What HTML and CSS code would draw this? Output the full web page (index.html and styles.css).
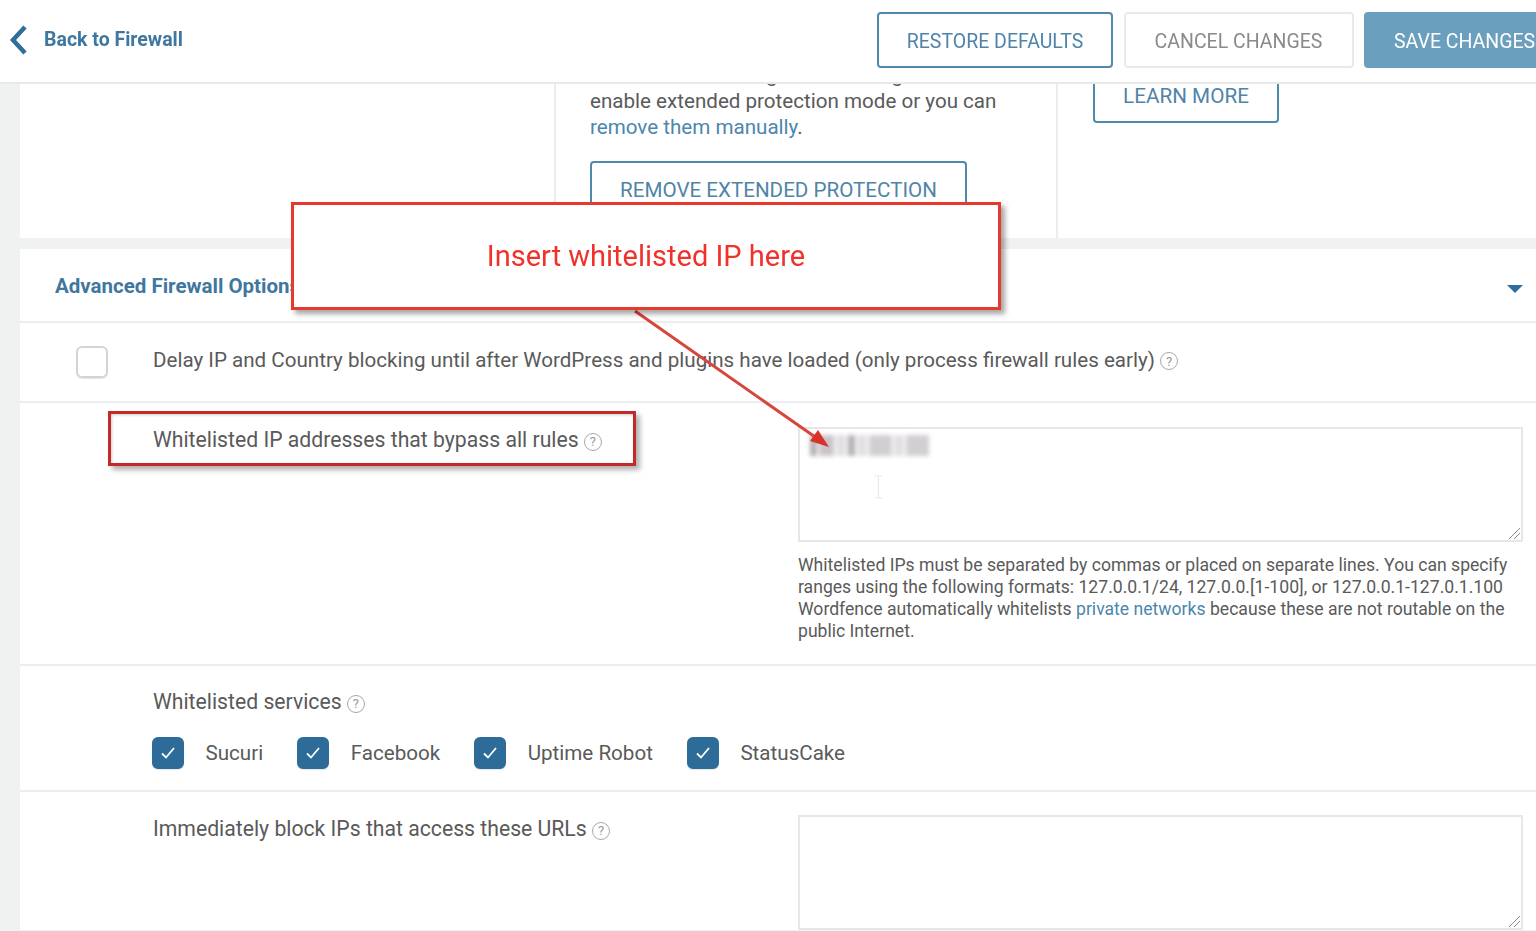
FILE: index.html
```html
<!DOCTYPE html>
<html lang="en">

<head>
    <meta charset="UTF-8">
    <meta name="viewport" content="width=device-width, initial-scale=1.0">
    <title>Firewall Options</title>
    <link rel="stylesheet" href="styles.css">
</head>

<body>
    <header class="topbar">
        <a class="back" href="#">
            <svg class="back-icon" width="20" height="32" viewBox="0 0 20 32"><path d="M16 3 L4 16 L16 29" fill="none" stroke="#2f6d9a" stroke-width="4.5"/></svg>
            Back to Firewall
        </a>
        <div class="actions">
            <button class="btn btn-outline btn-restore">Restore Defaults</button>
            <button class="btn btn-muted">Cancel Changes</button>
            <button class="btn btn-save">Save Changes</button>
        </div>
    </header>

    <main class="page">
        <section class="card card-top">
            <div class="col-empty"></div>
            <div class="col-mid">
                <p>to remove the configuration changes that<br>enable extended protection mode or you can<br><a href="#">remove them manually</a>.</p>
                <button class="btn btn-outline btn-remove">Remove Extended Protection</button>
            </div>
            <div class="col-right">
                <button class="btn btn-outline btn-learn">Learn More</button>
            </div>
        </section>

        <section class="card">
            <div class="card-head">
                <h2>Advanced Firewall Options</h2>
                <span class="caret"></span>
            </div>

            <div class="row row-delay">
                <span class="check"></span>
                <span>Delay IP and Country blocking until after WordPress and plugins have loaded (only process firewall rules early) <i class="help">?</i></span>
            </div>

            <div class="row row-field row-ips">
                <label>Whitelisted IP addresses that bypass all rules <i class="help">?</i></label>
                <div>
                    <div class="area-wrap">
                        <textarea class="area"></textarea>
                        <div class="blurred">
                            <span class="b4"></span><span class="b1"></span><span class="b2"></span><span class="b4"></span><span class="b2"></span><span class="b3"></span><span class="b2"></span><span class="b3"></span>
                        </div>
                        <svg class="ibeam" width="9" height="24" viewBox="0 0 9 24"><path d="M1 1 H8 M4.5 1 V23 M1 23 H8" fill="none" stroke="#e8e8e8" stroke-width="1"/></svg>
                        <svg class="grip" width="13" height="13" viewBox="0 0 13 13"><path d="M1 12 L12 1 M6 12 L12 6" fill="none" stroke="#8a8a8a" stroke-width="1"/></svg>
                    </div>
                    <p class="note">Whitelisted IPs must be separated by commas or placed on separate lines. You can specify ranges using the following formats: 127.0.0.1/24, 127.0.0.[1-100], or 127.0.0.1-127.0.1.100 Wordfence automatically whitelists <a href="#">private networks</a> because these are not routable on the public Internet.</p>
                </div>
            </div>

            <div class="row row-services">
                <label>Whitelisted services <i class="help">?</i></label>
                <div class="services">
                    <span class="service"><span class="check on"><svg width="18" height="16" viewBox="0 0 18 16"><path d="M3 8.5 L7 12.5 L15 3" fill="none" stroke="#fff" stroke-width="1.8"/></svg></span>Sucuri</span>
                    <span class="service"><span class="check on"><svg width="18" height="16" viewBox="0 0 18 16"><path d="M3 8.5 L7 12.5 L15 3" fill="none" stroke="#fff" stroke-width="1.8"/></svg></span>Facebook</span>
                    <span class="service"><span class="check on"><svg width="18" height="16" viewBox="0 0 18 16"><path d="M3 8.5 L7 12.5 L15 3" fill="none" stroke="#fff" stroke-width="1.8"/></svg></span>Uptime Robot</span>
                    <span class="service"><span class="check on"><svg width="18" height="16" viewBox="0 0 18 16"><path d="M3 8.5 L7 12.5 L15 3" fill="none" stroke="#fff" stroke-width="1.8"/></svg></span>StatusCake</span>
                </div>
            </div>

            <div class="row row-field row-urls">
                <label>Immediately block IPs that access these URLs <i class="help">?</i></label>
                <div class="area-wrap">
                    <textarea class="area"></textarea>
                    <svg class="grip" width="13" height="13" viewBox="0 0 13 13"><path d="M1 12 L12 1 M6 12 L12 6" fill="none" stroke="#8a8a8a" stroke-width="1"/></svg>
                </div>
            </div>
        </section>
    </main>

    <!-- annotations drawn over the page -->
    <div class="callout">Insert whitelisted IP here</div>
    <div class="mark"></div>
    <svg class="arrow" width="220" height="160" viewBox="0 0 220 160">
        <line x1="3" y1="2" x2="186" y2="130" stroke="#d8453c" stroke-width="3"/>
        <polygon points="197,138 178,132 186,121" fill="#d8332b"/>
    </svg>
</body>

</html>
```

FILE: styles.css
```css
* {
    margin: 0;
    padding: 0;
    box-sizing: border-box;
}

html, body {
    height: 931px;
    overflow: hidden;
}

body {
    background-color: #f0f1f1;
    font-family: Roboto, "Liberation Sans", sans-serif;
    font-size: 20.6px;
    color: #5a5a5a;
    position: relative;
    filter: blur(0.5px);
}

a {
    color: #4b86ad;
    text-decoration: none;
}

.topbar {
    height: 84px;
    background-color: #fff;
    border-bottom: 2px solid #e8e9e9;
    display: flex;
    justify-content: space-between;
    align-items: flex-start;
    padding-left: 9px;
    overflow: hidden;
    position: relative;
    z-index: 2;
}

.back {
    display: flex;
    align-items: center;
    gap: 15px;
    height: 79px;
    font-size: 19.5px;
    font-weight: 700;
    color: #3f77a0;
}

.actions {
    display: flex;
    gap: 10.5px;
    padding-top: 12px;
    margin-right: -28px;
    flex-shrink: 0;
}

.btn {
    height: 56px;
    width: 230px;
    padding: 2px 0 0;
    font-family: Roboto, "Liberation Sans", sans-serif;
    font-size: 19.5px;
    text-transform: uppercase;
    border-radius: 4px;
    background-color: #fff;
    white-space: nowrap;
}

.btn-restore {
    width: 236px;
}

.btn-outline {
    border: 2px solid #4f89ae;
    color: #4f84a8;
}

.btn-muted {
    border: 2px solid #eaeaea;
    color: #8a8a8a;
}

.btn-save {
    width: 200px;
    padding-left: 28px;
    text-align: left;
    border: 2px solid #6a9fbe;
    background-color: #6a9fbe;
    color: #fff;
}

.page {
    margin-left: 20px;
    display: flex;
    flex-direction: column;
    gap: 11px;
}

.card {
    background-color: #fff;
}

.card-top {
    height: 154px;
    display: grid;
    grid-template-columns: 534px 504px 1fr;
    overflow: hidden;
}

.col-mid {
    border-left: 2px solid #eceded;
    border-right: 2px solid #eceded;
    padding-left: 34px;
    margin-top: -22px;
    line-height: 26px;
}

.col-mid .btn-remove {
    margin-top: 21px;
    width: 377px;
    font-size: 20.6px;
}

.col-right {
    padding-left: 35px;
    margin-top: -17px;
}

.btn-learn {
    width: 186px;
    font-size: 20.7px;
}

.card-head {
    height: 74px;
    display: flex;
    align-items: center;
    justify-content: space-between;
    padding: 2px 13px 0 35px;
    border-bottom: 2px solid #eceded;
}

.card-head h2 {
    font-size: 20.5px;
    font-weight: 700;
    color: #3f77a0;
}

.caret {
    width: 0;
    height: 0;
    border-left: 8px solid transparent;
    border-right: 8px solid transparent;
    border-top: 8px solid #2f6d9a;
    margin-top: 6px;
}

.row {
    border-bottom: 2px solid #eceded;
    padding-left: 133px;
}

.row label {
    font-size: 21.2px;
}

.row-delay {
    height: 80px;
    display: flex;
    align-items: center;
    gap: 45px;
    padding-left: 56px;
}

.row-delay > span:last-child {
    margin-top: -5px;
}

.check {
    width: 32px;
    height: 32px;
    border: 2px solid #d4d4d4;
    border-radius: 6px;
    flex-shrink: 0;
    box-shadow: 0 1px 1px #e5e5e5;
    display: flex;
    align-items: center;
    justify-content: center;
}

.check.on {
    background-color: #2d6c98;
    border-color: #2d6c98;
}

.help {
    display: inline-flex;
    align-items: center;
    justify-content: center;
    width: 18px;
    height: 18px;
    border: 1.5px solid #a8a8a8;
    border-radius: 50%;
    font-size: 13px;
    font-style: normal;
    color: #999;
    vertical-align: 1px;
}

.row-field {
    display: grid;
    grid-template-columns: 645px 725px;
}

.row-field label {
    padding-top: 24px;
}

.row-ips {
    height: 263px;
}

.row-ips .area-wrap {
    margin-top: 24px;
}

.row-services {
    height: 126px;
    padding-top: 23px;
}

.row-urls {
    border-bottom: none;
}

.row-urls .area-wrap {
    margin-top: 23px;
}

.area-wrap {
    position: relative;
    height: 115px;
}

.area {
    display: block;
    width: 725px;
    height: 115px;
    border: 2px solid #e6e7e7;
    background-color: #fff;
    outline: none;
    resize: none;
}

.grip {
    position: absolute;
    right: 2px;
    bottom: 2px;
}

.blurred {
    position: absolute;
    left: 12px;
    top: 8px;
    display: flex;
    gap: 2px;
    filter: blur(2px);
}

.blurred span {
    height: 21px;
    width: 15px;
    background-color: #c9c4c8;
}

.blurred .b2 {
    width: 10px;
    background-color: #e2dfe2;
}

.blurred .b3 {
    width: 23px;
    background-color: #d2cfd2;
}

.blurred .b4 {
    width: 7px;
    background-color: #b4b0b4;
}

.ibeam {
    position: absolute;
    left: 76px;
    top: 48px;
}

.note {
    font-size: 17.6px;
    line-height: 22px;
    margin-top: 12px;
}

.services {
    display: flex;
    gap: 34px;
    margin-top: 22.5px;
    margin-left: -1px;
}

.service {
    display: flex;
    align-items: center;
    gap: 21.5px;
}

/* annotations */
.callout {
    position: absolute;
    left: 291px;
    top: 202px;
    width: 710px;
    height: 108px;
    background-color: #fff;
    border: 3px solid #e8392f;
    box-shadow: 4px 4px 5px rgba(0, 0, 0, 0.35);
    color: #f0322b;
    font-size: 29px;
    display: flex;
    align-items: center;
    justify-content: center;
    z-index: 3;
}

.mark {
    position: absolute;
    left: 108px;
    top: 411px;
    width: 528px;
    height: 55px;
    border: 3px solid #c22a2a;
    box-shadow: 4px 4px 5px rgba(0, 0, 0, 0.3), inset 1px 1px 3px rgba(0, 0, 0, 0.2);
}

.arrow {
    position: absolute;
    left: 632px;
    top: 309px;
}
```
